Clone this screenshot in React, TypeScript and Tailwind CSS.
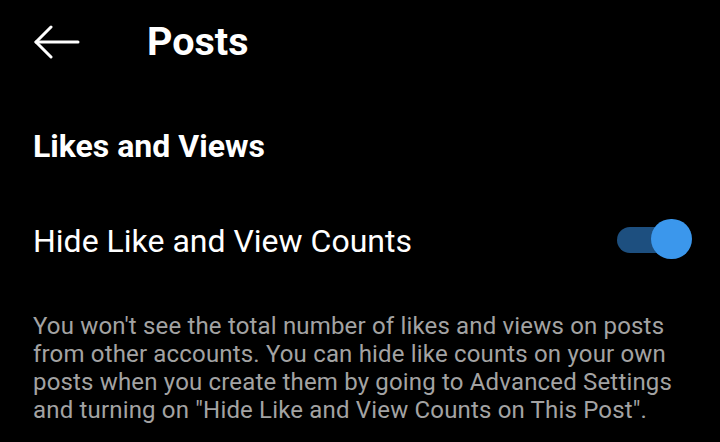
export default function App() {
  return (
    <div className="w-[720px] h-[442px] bg-black text-white overflow-hidden" style={{ fontFamily: "Roboto, 'Noto Sans', sans-serif" }}>
      <header className="h-[86px] flex items-start pl-[34px] pt-[22px]">
        <svg className="mt-[3px]" width="46" height="34" viewBox="0 0 46 34" fill="none" stroke="white" strokeWidth="3" strokeLinecap="round" strokeLinejoin="round">
          <path d="M2 17H44" />
          <path d="M17 2L2 17L17 32" />
        </svg>
        <h1 className="ml-[67px] text-[39.5px] font-bold leading-none">Posts</h1>
      </header>
      <section className="pl-[33px] pr-[28px] pt-[44px]">
        <h2 className="text-[32px] font-bold leading-none">Likes and Views</h2>
        <div className="mt-[57px] flex items-start justify-between">
          <span className="mt-[6px] text-[32px] leading-none">Hide Like and View Counts</span>
          <div className="relative w-[75px] h-[40px]">
            <div className="absolute left-0 top-[8px] w-[62px] h-[26px] rounded-full bg-[#1d4f7f]" />
            <div className="absolute right-0 top-0 w-[41px] h-[40px] rounded-full bg-[#3b97ec]" />
          </div>
        </div>
        <p className="mt-[53px] w-[655px] text-[24px] leading-[28px] tracking-[0.17px] text-[#a3a3a3]">
          You won't see the total number of likes and views on posts from other accounts. You can hide like counts on your own posts when you create them by going to Advanced Settings and turning on "Hide Like and View Counts on This Post".
        </p>
      </section>
    </div>
  )
}
